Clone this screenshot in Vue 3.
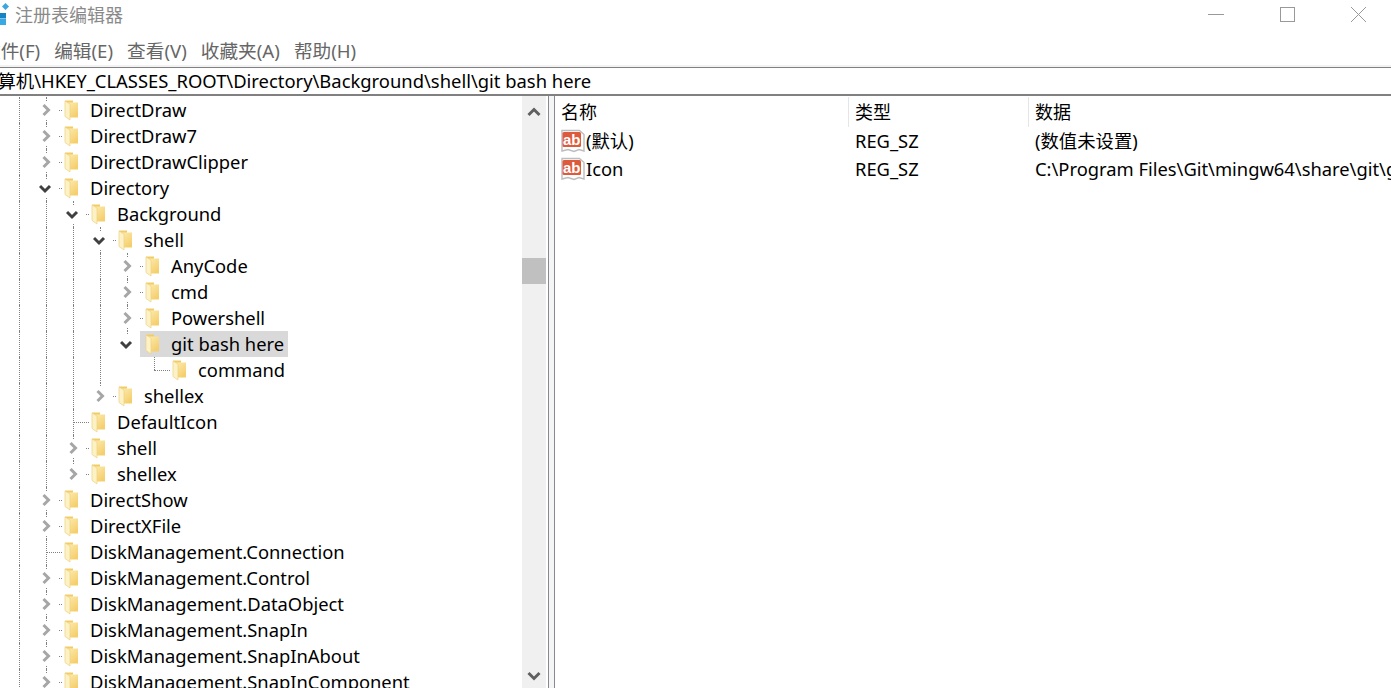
<script setup>
import { computed } from 'vue'

const tree = [
  { name: 'DirectDraw', kids: 'closed' },
  { name: 'DirectDraw7', kids: 'closed' },
  { name: 'DirectDrawClipper', kids: 'closed' },
  { name: 'Directory', children: [
    { name: 'Background', children: [
      { name: 'shell', children: [
        { name: 'AnyCode', kids: 'closed' },
        { name: 'cmd', kids: 'closed' },
        { name: 'Powershell', kids: 'closed' },
        { name: 'git bash here', selected: true, children: [{ name: 'command' }] }
      ] },
      { name: 'shellex', kids: 'closed' }
    ] },
    { name: 'DefaultIcon' },
    { name: 'shell', kids: 'closed' },
    { name: 'shellex', kids: 'closed' }
  ] },
  { name: 'DirectShow', kids: 'closed' },
  { name: 'DirectXFile', kids: 'closed' },
  { name: 'DiskManagement.Connection' },
  { name: 'DiskManagement.Control', kids: 'closed' },
  { name: 'DiskManagement.DataObject', kids: 'closed' },
  { name: 'DiskManagement.SnapIn', kids: 'closed' },
  { name: 'DiskManagement.SnapInAbout', kids: 'closed' },
  { name: 'DiskManagement.SnapInComponent', kids: 'closed' }
]

const rows = computed(() => {
  const out = []
  const walk = (list, level, cont) => {
    list.forEach((n, i) => {
      const more = i < list.length - 1 || level === 0
      out.push({
        name: n.name,
        level,
        selected: !!n.selected,
        state: n.children ? 'open' : n.kids ? 'closed' : 'none',
        cont,
        more
      })
      if (n.children) walk(n.children, level + 1, [...cont, more ? level : -1].filter(v => v >= 0))
    })
  }
  walk(tree, 0, [])
  return out
})

const guideX = level => 46 + level * 27

const menus = ['文件(F)', '编辑(E)', '查看(V)', '收藏夹(A)', '帮助(H)']
const values = [
  { name: '(默认)', type: 'REG_SZ', data: '(数值未设置)' },
  { name: 'Icon', type: 'REG_SZ', data: 'C:\\Program Files\\Git\\mingw64\\share\\git\\git-for-windows.ico' }
]
</script>

<template>
  <div class="window">
    <header class="titlebar">
      <div class="title-left">
        <svg class="app-icon" width="10" height="30" viewBox="0 0 10 30">
          <path d="M5.5 3L9 6.5L5.5 10L2 6.5Z" fill="#3aa7e0" />
          <rect x="0" y="13" width="6" height="5.5" fill="#1583c4" />
          <rect x="0" y="19" width="6" height="6" fill="#38a9e4" />
        </svg>
        <span class="title-text">注册表编辑器</span>
      </div>
      <div class="controls">
        <svg width="18" height="18" viewBox="0 0 18 18"><path d="M0 8.5H16" stroke="#999" fill="none" /></svg>
        <svg width="18" height="18" viewBox="0 0 18 18"><rect x="1.5" y="1.5" width="14" height="14" stroke="#999" fill="none" /></svg>
        <svg width="18" height="18" viewBox="0 0 18 18"><path d="M1 1L16 16M16 1L1 16" stroke="#999" fill="none" /></svg>
      </div>
    </header>

    <nav class="menubar">
      <span v-for="m in menus" :key="m" class="menu">{{ m }}</span>
    </nav>

    <div class="address">计算机\HKEY_CLASSES_ROOT\Directory\Background\shell\git bash here</div>

    <main class="body">
      <section class="tree-pane">
        <div class="tree">
          <div v-for="(r, i) in rows" :key="i" class="row">
            <i class="guide v root"></i>
            <i v-for="c in r.cont" :key="c" class="guide v" :style="{ left: guideX(c) + 'px' }"></i>
            <i class="guide v" :class="r.more ? '' : 'half'" :style="{ left: guideX(r.level) + 'px' }"></i>
            <i class="guide h" :style="{ left: guideX(r.level) + 'px' }"></i>
            <span v-if="r.state !== 'none'" class="chev-box" :style="{ left: guideX(r.level) - 9 + 'px' }">
              <svg width="14" height="14" viewBox="0 0 14 14">
                <path v-if="r.state === 'closed'" d="M4.5 2L9.5 7L4.5 12" stroke="#a6a6a6" stroke-width="3" fill="none" />
                <path v-else d="M1 5L6 10L11 5" stroke="#404040" stroke-width="3" fill="none" />
              </svg>
            </span>
            <span class="item" :class="{ selected: r.selected }" :style="{ marginLeft: 59 + r.level * 27 + 'px' }">
              <svg class="folder" width="16" height="22" viewBox="0 0 16 22">
                <defs>
                  <linearGradient id="fb" x1="0" y1="0" x2="0.6" y2="1">
                    <stop offset="0" stop-color="#fdeeb4" />
                    <stop offset="1" stop-color="#f5cf6e" />
                  </linearGradient>
                </defs>
                <path d="M3 2H7L8.5 3.5H14V18.5H3Z" fill="url(#fb)" />
                <path d="M1 1.5H9V3.5H1Z" fill="#f0cc66" />
                <path d="M1 2V17.5L6 21V5Z" fill="#fdf1c6" stroke="#ecd183" stroke-width=".7" />
              </svg>
              <span class="label">{{ r.name }}</span>
            </span>
          </div>
        </div>
        <aside class="scrollbar">
          <svg class="arrow top" width="14" height="10" viewBox="0 0 14 10"><path d="M1.5 8L7 2.5L12.5 8" stroke="#606060" stroke-width="3" fill="none" /></svg>
          <div class="track"><div class="thumb"></div></div>
          <svg class="arrow" width="14" height="10" viewBox="0 0 14 10"><path d="M1.5 2L7 7.5L12.5 2" stroke="#606060" stroke-width="3" fill="none" /></svg>
        </aside>
      </section>

      <div class="splitter"></div>

      <section class="list-pane">
        <div class="list-head">
          <span>名称</span>
          <span>类型</span>
          <span>数据</span>
        </div>
        <div v-for="v in values" :key="v.name" class="list-row">
          <span class="name-cell">
            <svg class="ab" width="24" height="24" viewBox="0 0 24 24">
              <path d="M1 1.5H18.5L23 5.5V22L18 20.5L13 22.5L7 20.5L1 22Z" fill="#fff" stroke="#bdbdbd" stroke-width="1.4" />
              <rect x="1.5" y="3" width="18.5" height="15" rx="1.5" fill="#dd5a3c" />
              <text x="10.75" y="15.5" text-anchor="middle" class="ab-text">ab</text>
            </svg>
            <span class="cell-text name-text">{{ v.name }}</span>
          </span>
          <span class="cell-text">{{ v.type }}</span>
          <span class="cell-text">{{ v.data }}</span>
        </div>
      </section>
    </main>
  </div>
</template>

<style>
html, body { margin: 0; overflow: hidden; background: #fff; }
</style>

<style scoped>
.window {
  width: 1391px;
  height: 688px;
  overflow: hidden;
  display: flex;
  flex-direction: column;
  background: #fff;
  color: #000;
  font-family: "Noto Sans", "Noto Sans CJK SC", sans-serif;
  font-size: 18.35px;
}
.titlebar {
  height: 30px;
  display: flex;
  justify-content: space-between;
  align-items: center;
  flex: none;
}
.title-left { display: flex; align-items: center; gap: 5px; }
.app-icon { flex: none; }
.title-text { font: 18px "Noto Sans CJK SC", sans-serif; color: #8a8a8a; padding-bottom: 2px; }
.controls { display: flex; gap: 53px; padding-right: 23px; }
.menubar {
  height: 37px;
  box-sizing: border-box;
  padding-top: 4px;
  display: flex;
  gap: 14px;
  align-items: center;
  margin-left: -18px;
  flex: none;
  border-bottom: 2px solid #f2f2f2;
  color: #666;
  font-size: 18.67px;
}
.address {
  height: 29px;
  box-sizing: border-box;
  flex: none;
  border-top: 1px solid #808080;
  border-bottom: 2px solid #808080;
  margin-left: -21px;
  line-height: 26px;
  white-space: nowrap;
  font-size: 18.4px;
}
.body { flex: 1; min-height: 0; display: flex; }
.tree-pane { width: 546px; display: flex; flex: none; }
.tree { width: 522px; padding-top: 1px; overflow: hidden; flex: none; }
.row { position: relative; height: 26px; display: flex; align-items: center; }
.guide { position: absolute; display: block; }
.guide.v { top: 0; bottom: 0; border-left: 1px dotted #808080; }
.guide.v.root { left: 19px; }
.guide.v.half { bottom: 13px; }
.guide.h { top: 13px; width: 16px; border-top: 1px dotted #808080; }
.chev-box {
  position: absolute;
  top: 4px;
  width: 18px;
  height: 18px;
  padding-right: 3px;
  background: #fff;
  display: flex;
  align-items: center;
  justify-content: center;
  z-index: 1;
}
.item {
  position: relative;
  z-index: 1;
  display: flex;
  align-items: center;
  height: 26px;
  padding: 0 4px 0 5px;
  white-space: nowrap;
}
.item.selected { background: #d9d9d9; }
.folder { flex: none; }
.label { margin-left: 10px; padding-bottom: 2px; }
.scrollbar {
  width: 24px;
  flex: none;
  background: #f0f0f0;
  display: flex;
  flex-direction: column;
  align-items: center;
}
.arrow { flex: none; margin: 7px 0; }
.arrow.top { margin: 11px 0 7px; }
.track { flex: 1; width: 100%; padding-top: 134px; box-sizing: border-box; }
.thumb { height: 26px; background: #c0c0c0; }
.splitter {
  width: 7px;
  box-sizing: border-box;
  margin-left: 2px;
  flex: none;
  border-left: 1px solid #868a90;
  border-right: 1px solid #868a90;
  background: #f5f5f5;
}
.list-pane {
  flex: 1;
  min-width: 0;
  overflow: hidden;
}
.list-head, .list-row {
  display: grid;
  grid-template-columns: 294px 180px 1fr;
  white-space: nowrap;
}
.list-head { height: 30px; margin-top: 1px; align-items: stretch; font-size: 18px; }
.list-head span { padding-left: 6px; border-right: 1px solid #e5e5e5; line-height: 30px; }
.list-head span:last-child { border-right: 0; }
.list-row { height: 28px; align-items: center; }
.cell-text { padding: 0 0 2px 6px; }
.name-cell { display: flex; align-items: center; padding-left: 6px; }
.name-text { padding-left: 1px; }
.ab { flex: none; }
.ab-text { font: 700 15px "Liberation Sans", sans-serif; fill: #fff; }
</style>
